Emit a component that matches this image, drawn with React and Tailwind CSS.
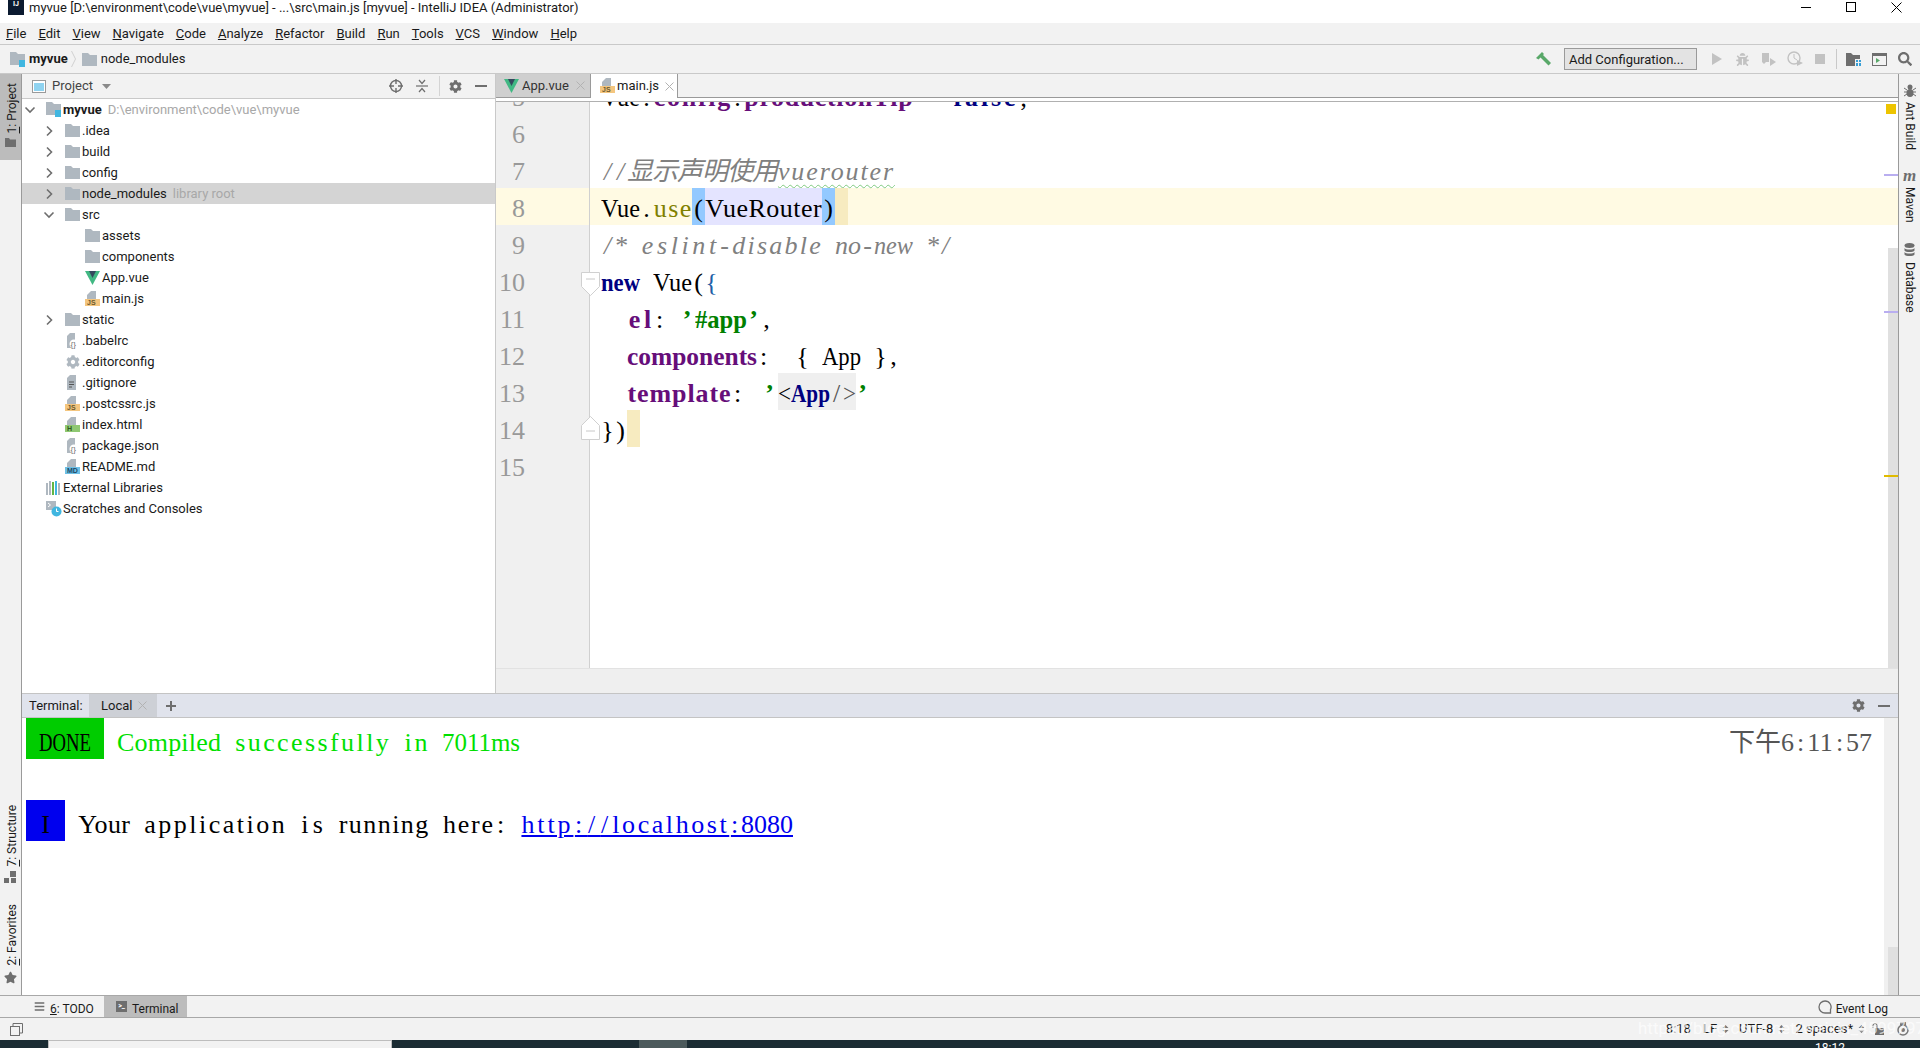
import { FaCog, FaBug, FaStar, FaSearch, FaBars } from "react-icons/fa";

const UI_FONT = "font-['Roboto','Liberation_Sans',sans-serif]";

const MENU = ["File", "Edit", "View", "Navigate", "Code", "Analyze", "Refactor", "Build", "Run", "Tools", "VCS", "Window", "Help"];

const TREE = [
  { name: "myvue", level: 0, open: true, icon: "project", bold: true, hint: "D:\\environment\\code\\vue\\myvue" },
  { name: ".idea", level: 1, closed: true, icon: "folder" },
  { name: "build", level: 1, closed: true, icon: "folder" },
  { name: "config", level: 1, closed: true, icon: "folder" },
  { name: "node_modules", level: 1, closed: true, icon: "folder", hint: "library root", selected: true },
  { name: "src", level: 1, open: true, icon: "folder" },
  { name: "assets", level: 2, icon: "folder" },
  { name: "components", level: 2, icon: "folder" },
  { name: "App.vue", level: 2, icon: "vue" },
  { name: "main.js", level: 2, icon: "js" },
  { name: "static", level: 1, closed: true, icon: "folder" },
  { name: ".babelrc", level: 1, icon: "json" },
  { name: ".editorconfig", level: 1, icon: "gear" },
  { name: ".gitignore", level: 1, icon: "text" },
  { name: ".postcssrc.js", level: 1, icon: "js" },
  { name: "index.html", level: 1, icon: "html" },
  { name: "package.json", level: 1, icon: "json" },
  { name: "README.md", level: 1, icon: "md" },
  { name: "External Libraries", level: 0, icon: "libs" },
  { name: "Scratches and Consoles", level: 0, icon: "scratch" },
];

const LEVEL_PADDING = ["pl-0", "pl-[19px]", "pl-[39px]"];

// the IDE font is a serif set in 13px cells, so every token is fitted to its cell count
const CELL = 13;
const measure = document.createElement("canvas").getContext("2d");
const TOKENS = /(\s+|[.,:;(){}<>/*'’-])/;

function Mono({ text, bold, italic, className = "" }) {
  measure.font = `${italic ? "italic " : ""}${bold ? "bold " : ""}26px "Liberation Serif"`;
  const parts = text.split(TOKENS).filter(Boolean);
  return (
    <span className={`${bold ? "font-bold" : ""} ${italic ? "italic" : ""} ${className}`}>
      {parts.map((part, i) => {
        const cells = part.length * CELL;
        const natural = measure.measureText(part).width;
        const t = (cells - natural) / part.length;
        // too wide for its cells: squeeze the glyphs rather than let them collide
        if (t < 0) {
          return (
            <span
              key={i}
              className="inline-block origin-left"
              style={{ width: cells, transform: `scaleX(${cells / natural})` }}
            >
              {part}
            </span>
          );
        }
        return (
          <span key={i} style={{ letterSpacing: t, marginLeft: t / 2, marginRight: -t / 2 }}>
            {part}
          </span>
        );
      })}
    </span>
  );
}

function Folder({ className = "" }) {
  return (
    <svg width="15" height="13" viewBox="0 0 15 13" className={className}>
      <path d="M0 0h6l2 2h7v11H0z" fill="#AFB8C0" />
    </svg>
  );
}

function ProjectFolder() {
  return (
    <svg width="16" height="15" viewBox="0 0 16 15">
      <path d="M0 0h6l2 2h7v11H0z" fill="#AFB8C0" />
      <rect x="9" y="8" width="6" height="7" fill="#40B6E0" />
    </svg>
  );
}

function VueIcon() {
  return (
    <svg width="15" height="14" viewBox="0 0 15 14">
      <path d="M0 0h15L7.5 14z" fill="#41B883" />
      <path d="M4 0h7L7.5 7z" fill="#35495E" />
    </svg>
  );
}

function LabelFile({ label, color, dark }) {
  return (
    <svg width="16" height="16" viewBox="0 0 16 16">
      <path d="M6 0h5v8H2V4z" fill="#AFB8C0" />
      <rect x="0" y="8" width="15" height="7" fill={color} />
      <text x="2" y="14.4" fontSize="7" fontFamily="Liberation Sans" fontWeight="700" fill={dark}>{label}</text>
    </svg>
  );
}

function JsonFile() {
  return (
    <svg width="15" height="16" viewBox="0 0 15 16">
      <path d="M5 0h5v15H2V3z" fill="#AFB8C0" />
      <circle cx="9" cy="11" r="4.5" fill="#fff" />
      <text x="5.6" y="14" fontSize="8" fontFamily="Liberation Sans" fill="#6e6e6e">{"{}"}</text>
    </svg>
  );
}

function TextFile() {
  return (
    <svg width="15" height="16" viewBox="0 0 15 16">
      <path d="M5 0h6v15H2V3z" fill="#AFB8C0" />
      <path d="M4 7h5M4 9.5h5M4 12h3" stroke="#555" strokeWidth="1" />
    </svg>
  );
}

function LibsIcon() {
  return (
    <svg width="15" height="14" viewBox="0 0 15 14">
      <rect x="0" y="2" width="2" height="12" fill="#AFB8C0" />
      <rect x="3" y="0" width="2" height="14" fill="#AFB8C0" />
      <rect x="6" y="1" width="2" height="13" fill="#62B543" />
      <rect x="9" y="0" width="2" height="14" fill="#40B6E0" />
      <rect x="12" y="2" width="2" height="12" fill="#AFB8C0" />
    </svg>
  );
}

function ScratchIcon() {
  return (
    <svg width="16" height="16" viewBox="0 0 16 16">
      <rect x="0" y="0" width="10" height="9" fill="#AFB8C0" />
      <path d="M2 2l2.5 2L2 6" stroke="#fff" fill="none" />
      <circle cx="10.5" cy="10.5" r="5" fill="#40B6E0" />
      <path d="M10.5 7.5v3h2" stroke="#fff" fill="none" />
    </svg>
  );
}

function TreeIcon({ type }) {
  if (type === "project") return <ProjectFolder />;
  if (type === "folder") return <Folder />;
  if (type === "vue") return <VueIcon />;
  if (type === "js") return <LabelFile label="JS" color="#F4C67F" dark="#6b5a2e" />;
  if (type === "html") return <LabelFile label="H" color="#8FC872" dark="#2f5a1e" />;
  if (type === "md") return <LabelFile label="MD" color="#6EC0E6" dark="#1d4a66" />;
  if (type === "json") return <JsonFile />;
  if (type === "text") return <TextFile />;
  if (type === "gear") return <FaCog className="text-[#AFB8C0] text-[14px] ml-px" />;
  if (type === "libs") return <LibsIcon />;
  return <ScratchIcon />;
}

function Chevron({ open }) {
  return (
    <svg width="16" height="12" viewBox="0 0 16 12">
      {open ? (
        <path d="M3.5 3.5L8 8l4.5-4.5" stroke="#6e6e6e" strokeWidth="1.6" fill="none" />
      ) : (
        <path d="M6 1.5L10.5 6 6 10.5" stroke="#6e6e6e" strokeWidth="1.6" fill="none" />
      )}
    </svg>
  );
}

function TreeRow({ item }) {
  return (
    <div className={`flex items-center h-[21px] ${LEVEL_PADDING[item.level]} ${item.selected ? "bg-[#d4d4d4]" : ""}`}>
      <span className="w-4 shrink-0 flex items-center">
        {(item.open || item.closed) && <Chevron open={item.open} />}
      </span>
      <span className="w-[17px] ml-2 shrink-0 flex items-center">
        <TreeIcon type={item.icon} />
      </span>
      <span className={`text-[13px] text-[#1a1a1a] whitespace-nowrap ${item.bold ? "font-bold" : ""}`}>{item.name}</span>
      {item.hint && <span className="ml-[6px] text-[13px] text-[#a8a8a8] whitespace-nowrap">{item.hint}</span>}
    </div>
  );
}

function Underlined({ text }) {
  return (
    <span>
      <span className="underline">{text[0]}</span>
      {text.slice(1)}
    </span>
  );
}

function Close({ className = "" }) {
  return (
    <svg width="9" height="9" viewBox="0 0 9 9" className={`shrink-0 ${className}`}>
      <path d="M0.5 0.5l8 8M8.5 0.5l-8 8" stroke="#b2b2b2" strokeWidth="1" />
    </svg>
  );
}

function MinusBar() {
  return <span className="block w-3 h-[2px] bg-[#6e6e6e]" />;
}

function Hammer() {
  return (
    <svg width="16" height="16" viewBox="0 0 16 16">
      <path d="M0 7l6-6 2 2-1 1 8 8-2.5 2.500-8-8-2 2z" fill="#59A869" />
    </svg>
  );
}

function ToolbarIcons() {
  return (
    <div className="flex items-center h-full">
      <Hammer />
      <button className="ml-3 w-[133px] h-[22px] bg-[#e3e3e3] border border-[#9a9a9a] text-[13px] text-[#1a1a1a] text-left pl-1 leading-none">
        Add Configuration...
      </button>
      <svg width="12" height="14" viewBox="0 0 12 14" className="ml-[14px]">
        <path d="M1 1l10 6-10 6z" fill="#c2c2c2" />
      </svg>
      <FaBug className="ml-[13px] text-[#c2c2c2] text-[13px]" />
      <svg width="16" height="15" viewBox="0 0 16 15" className="ml-[12px]">
        <path d="M1 1h7v9H5l-2 2-2-2z" fill="#c2c2c2" />
        <path d="M9 6l6 4-6 4z" fill="#c2c2c2" />
      </svg>
      <svg width="17" height="16" viewBox="0 0 17 16" className="ml-[10px]">
        <circle cx="7" cy="7" r="6" stroke="#c2c2c2" strokeWidth="1.4" fill="none" />
        <path d="M7 3v4l3 2" stroke="#c2c2c2" fill="none" />
        <path d="M10 9l6 3-6 3z" fill="#c2c2c2" />
      </svg>
      <span className="ml-[11px] w-[10px] h-[10px] bg-[#c2c2c2]" />
      <span className="ml-[11px] w-px h-5 bg-[#c9c9c9]" />
      <svg width="15" height="13" viewBox="0 0 15 13" className="ml-[9px]">
        <path d="M0 0h5l2 2h7v4H9v7H0z" fill="#6e6e6e" />
        <rect x="10" y="7" width="2" height="2" fill="#389FD6" />
        <rect x="13" y="7" width="2" height="2" fill="#389FD6" />
        <rect x="10" y="10" width="2" height="3" fill="#389FD6" />
        <rect x="13" y="10" width="2" height="3" fill="#389FD6" />
      </svg>
      <svg width="15" height="13" viewBox="0 0 15 13" className="ml-[11px]">
        <rect x="0.5" y="0.500" width="14" height="12" fill="none" stroke="#6e6e6e" />
        <rect x="0.5" y="0.500" width="14" height="2.500" fill="#6e6e6e" />
        <path d="M4 5l4 2.500-4 2.500z" fill="#59A869" />
      </svg>
      <FaSearch className="ml-[11px] text-[#6e6e6e] text-[14px]" />
    </div>
  );
}

function TargetIcon() {
  return (
    <svg width="14" height="14" viewBox="0 0 14 14">
      <circle cx="7" cy="7" r="5.5" stroke="#6e6e6e" strokeWidth="1.4" fill="none" />
      <path d="M7 0v5M7 9v5M0 7h5M9 7h5" stroke="#6e6e6e" strokeWidth="1.4" />
    </svg>
  );
}

function CollapseIcon() {
  return (
    <svg width="12" height="14" viewBox="0 0 12 14">
      <path d="M0 7h12" stroke="#6e6e6e" strokeWidth="1.200" />
      <path d="M3 1l3 3.500L9 1M3 13l3-3.500L9 13" stroke="#6e6e6e" strokeWidth="1.200" fill="none" />
    </svg>
  );
}

function TabFileIcon({ type }) {
  if (type === "vue") return <VueIcon />;
  return <LabelFile label="JS" color="#F4C67F" dark="#6b5a2e" />;
}

function ProjectPanel() {
  return (
    <div className="w-[474px] shrink-0 bg-white border-r border-[#c9c9c9] flex flex-col">
      <div className="h-[25px] bg-[#f2f2f2] border-b border-[#c9c9c9] flex items-center pl-[10px] pr-2">
        <svg width="14" height="13" viewBox="0 0 14 13">
          <rect x="0.5" y="0.500" width="13" height="12" fill="#fff" stroke="#9a9a9a" />
          <rect x="2" y="3" width="10" height="8" fill="#8FD3F0" />
        </svg>
        <span className="ml-[6px] text-[13px] text-[#444]">Project</span>
        <svg width="9" height="5" viewBox="0 0 9 5" className="ml-[9px]">
          <path d="M0 0h9L4.500 5z" fill="#8a8a8a" />
        </svg>
        <span className="ml-auto flex items-center">
          <TargetIcon />
          <span className="ml-[13px]"><CollapseIcon /></span>
          <span className="ml-[11px] w-px h-5 bg-[#d4d4d4]" />
          <FaCog className="ml-[9px] text-[#6e6e6e] text-[13px]" />
          <span className="ml-[13px]"><MinusBar /></span>
        </span>
      </div>
      <div className="flex-1 overflow-hidden">
        {TREE.map((item) => (
          <TreeRow key={item.name} item={item} />
        ))}
      </div>
    </div>
  );
}

const NUMBERS = [5, 6, 7, 8, 9, 10, 11, 12, 13, 14, 15];

const PURPLE = "text-[#660e7a]";
const NAVY = "text-[#000080]";
const GREEN = "text-[#008000]";
const COMMENT = "text-[#808080]";
const BLOCK = "inline-block h-[37px] align-top";

function CodeLine({ children, className = "" }) {
  return <div className={`h-[37px] leading-[41px] pl-[11px] whitespace-pre ${className}`}>{children}</div>;
}

function Editor() {
  return (
    <div className="flex-1 min-w-0 flex flex-col">
      <div className="h-[24px] bg-[#f2f2f2] flex border-b border-[#9a9a9a] shrink-0">
        <div className="w-[95px] bg-[#cfcfcf] border-r border-[#9a9a9a] flex items-center pl-[8px]">
          <TabFileIcon type="vue" />
          <span className="ml-[3px] w-[48px] text-[13px] leading-[18px] text-[#333]">App.vue</span>
          <Close className="ml-[6px]" />
        </div>
        <div className="w-[87px] bg-white border-r border-[#9a9a9a] flex items-center pl-[9px] -mb-px">
          <TabFileIcon type="js" />
          <span className="ml-[1px] w-[41px] text-[13px] leading-[18px] text-[#1a1a1a]">main.js</span>
          <Close className="ml-[7px]" />
        </div>
      </div>
      <div className="h-[4px] bg-white border-b border-[#b0b0b0] shrink-0" />
      <div className="flex-1 min-h-0 flex relative overflow-hidden font-['Liberation_Serif','Noto_Sans_CJK_SC',serif] text-[26px] text-black">
        <div className="w-[94px] shrink-0 bg-[#f0f0f0] border-r border-[#d0d0d0] relative z-10">
          <div className="-mt-[25px]">
            {NUMBERS.map((n) => (
              <div
                key={n}
                className={`h-[37px] leading-[41px] pr-[64px] text-right text-[#999999] ${n === 8 ? "bg-[#fffae3]" : ""}`}
              >
                {n}
              </div>
            ))}
          </div>
          {/* fold markers */}
          <svg width="19" height="24" viewBox="0 0 19 24" className="absolute left-[85px] top-[170px]">
            <path d="M0.5 0.5h18v14l-9 9-9-9z" fill="#fff" stroke="#d0d0d0" />
            <path d="M5 7h9" stroke="#c8c8c8" />
          </svg>
          <svg width="19" height="24" viewBox="0 0 19 24" className="absolute left-[85px] top-[314px]">
            <path d="M0.5 23.500h18v-14l-9-9-9 9z" fill="#fff" stroke="#d0d0d0" />
            <path d="M5 15h9" stroke="#c8c8c8" />
          </svg>
        </div>
        <div className="flex-1 min-w-0 relative bg-white">
          <div className="-mt-[25px]">
            <CodeLine>
              <Mono text="Vue." />
              <Mono text="config" bold className={PURPLE} />
              <Mono text="." />
              <Mono text="productionTip" bold className={PURPLE} />
              <Mono text=" = " />
              <Mono text="false" bold className={NAVY} />
              <Mono text=";" />
            </CodeLine>
            <CodeLine />
            <CodeLine className={COMMENT}>
              <Mono text="//" italic />
              <span className="italic leading-none tracking-[-1px]">显示声明使用</span>
              <span className="underline decoration-wavy decoration-[#7fc97f] decoration-1 underline-offset-[4px]">
                <Mono text="vuerouter" italic />
              </span>
            </CodeLine>
            <CodeLine className="bg-[#fffae3]">
              <Mono text="Vue." />
              <Mono text="use" className="text-[#808000]" />
              <span className={`bg-[#93c9ff] ${BLOCK}`}><Mono text="(" /></span>
              <span className={`bg-[#e4e4ff] ${BLOCK}`}><Mono text="VueRouter" /></span>
              <span className={`bg-[#93c9ff] ${BLOCK}`}><Mono text=")" /></span>
              <span className={`bg-[#f7ebc0] w-[13px] ${BLOCK}`} />
            </CodeLine>
            <CodeLine className={COMMENT}>
              <Mono text="/* eslint-disable no-new */" italic />
            </CodeLine>
            <CodeLine>
              <Mono text="new" bold className={NAVY} />
              <Mono text=" Vue(" />
              <Mono text="{" className="text-[#1f5fa8]" />
            </CodeLine>
            <CodeLine>
              <Mono text="  " />
              <Mono text="el" bold className={PURPLE} />
              <Mono text=": " />
              <span className={`${GREEN} font-bold inline-block w-[16px] text-center`}>’</span>
              <Mono text="#app" bold className={GREEN} />
              <Mono text="’" bold className={GREEN} />
              <Mono text="," />
            </CodeLine>
            <CodeLine>
              <Mono text="  " />
              <Mono text="components" bold className={PURPLE} />
              <Mono text=":  { App }," />
            </CodeLine>
            <CodeLine>
              <Mono text="  " />
              <Mono text="template" bold className={PURPLE} />
              <Mono text=": " />
              <span className={`${GREEN} font-bold inline-block w-[21px] text-right pr-[4px]`}>’</span>
              <span className={`bg-[#efefef] ${BLOCK}`}>
                <Mono text="<" />
                <Mono text="App" bold className={NAVY} />
                <Mono text="/>" className="text-[#555]" />
              </span>
              <Mono text="’" bold className={GREEN} />
            </CodeLine>
            <CodeLine>
              <Mono text="})" />
              <span className={`bg-[#f7ebc0] w-[13px] ${BLOCK}`} />
            </CodeLine>
          </div>
          {/* scrollbar and error stripe */}
          <div className="absolute right-0 top-[146px] bottom-0 w-[10px] bg-[#e0e0e0]" />
          <div className="absolute right-[2px] top-[2px] w-[10px] h-[10px] bg-[#edc400]" />
          <div className="absolute right-0 top-[72px] w-[14px] h-[2px] bg-[#b9aef0]" />
          <div className="absolute right-0 top-[209px] w-[14px] h-[2px] bg-[#b9aef0]" />
          <div className="absolute right-0 top-[373px] w-[14px] h-[2px] bg-[#e0bb00]" />
        </div>
      </div>
      <div className="h-[25px] bg-[#efefef] border-t border-[#e2e2e2] shrink-0" />
    </div>
  );
}

function Terminal() {
  return (
    <div className="flex-1 min-h-0 flex flex-col">
      <div className="h-[25px] shrink-0 bg-[#e0e3ec] border-y border-[#c4c4c4] flex items-center pl-[7px] pr-2">
        <span className="w-[60px] text-[13px] leading-[18px] text-[#1a1a1a]">Terminal:</span>
        <div className="w-[68px] h-full bg-[#cdd0d6] flex items-center pl-3">
          <span className="w-[30px] text-[13px] leading-[18px] text-[#1a1a1a]">Local</span>
          <Close className="ml-[7px]" />
        </div>
        <svg width="12" height="12" viewBox="0 0 12 12" className="ml-[8px]">
          <path d="M6 1v10M1 6h10" stroke="#6e6e6e" strokeWidth="2" />
        </svg>
        <span className="ml-auto flex items-center">
          <FaCog className="text-[#6e6e6e] text-[13px]" />
          <span className="ml-[13px]"><MinusBar /></span>
        </span>
      </div>
      <div className="flex-1 min-h-0 flex bg-white">
        <div className="flex-1 min-w-0 pl-1 pr-3 font-['Liberation_Serif','Noto_Sans_CJK_SC',serif] text-[26px] text-black">
          <div className="h-[41px] leading-[50px] flex whitespace-pre">
            <span className="bg-[#00cc00] h-[41px]"><Mono text=" DONE " /></span>
            <Mono text=" Compiled successfully in 7011ms" className="text-[#00e000]" />
            <span className="ml-auto text-[#555]">
              <span className="leading-none">下午</span>
              <Mono text="6:11:57" />
            </span>
          </div>
          <div className="h-[41px]" />
          <div className="h-[41px] leading-[50px] flex whitespace-pre">
            <span className="bg-[#0000ee] h-[41px]"><Mono text=" I " /></span>
            <Mono text=" Your application is running here: " />
            <span className="text-[#0000ee] underline"><Mono text="http://localhost:8080" /></span>
          </div>
        </div>
        <div className="w-[14px] bg-[#f0f0f0] shrink-0 flex flex-col justify-end items-end">
          <div className="w-[10px] h-[48px] bg-[#e0e0e0]" />
        </div>
      </div>
    </div>
  );
}

function VerticalLabel({ children, icon }) {
  return (
    <div className="flex flex-col items-center gap-[5px]">
      <span className="[writing-mode:vertical-rl] rotate-180 whitespace-nowrap ml-[2px]">{children}</span>
      {icon}
    </div>
  );
}

function LeftStripe() {
  return (
    <div className="w-[22px] shrink-0 bg-[#f2f2f2] border-r border-[#9a9a9a] flex flex-col items-center text-[12px] text-[#1a1a1a] leading-none">
      <div className="w-full h-[86px] bg-[#bcbcbc] flex flex-col items-center pt-[9px]">
        <VerticalLabel
          icon={<svg width="11" height="9" viewBox="0 0 11 9"><path d="M0 0h4l1 1.500h6V9H0z" fill="#6e6e6e" /></svg>}
        >
          <span className="underline">1</span>: Project
        </VerticalLabel>
      </div>
      <div className="mt-auto flex flex-col items-center pb-[11px] gap-[20px]">
        <VerticalLabel
          icon={
            <svg width="13" height="13" viewBox="0 0 13 13">
              <rect x="6" y="0" width="6" height="6" fill="#6e6e6e" />
              <rect x="0" y="7" width="5" height="5" fill="#6e6e6e" />
              <rect x="7" y="7" width="5" height="5" fill="#6e6e6e" />
            </svg>
          }
        >
          <span className="underline">7</span>: Structure
        </VerticalLabel>
        <VerticalLabel icon={<FaStar className="text-[#6e6e6e] text-[13px]" />}>
          <span className="underline">2</span>: Favorites
        </VerticalLabel>
      </div>
    </div>
  );
}

function RightStripe() {
  return (
    <div className="w-[22px] shrink-0 bg-[#f2f2f2] border-l border-[#9a9a9a] flex flex-col items-center pt-[10px] text-[12px] text-[#1a1a1a] leading-none">
      <svg width="12" height="13" viewBox="0 0 12 13">
        <ellipse cx="6" cy="3" rx="2.500" ry="2.500" fill="#6e6e6e" />
        <ellipse cx="6" cy="9" rx="3.500" ry="4" fill="#6e6e6e" />
        <path d="M0 4l3 2M12 4L9 6M0 12l3-2M12 12l-3-2M0 8h3M12 8H9" stroke="#6e6e6e" />
      </svg>
      <span className="mt-[5px] [writing-mode:vertical-rl] whitespace-nowrap">Ant Build</span>
      <span className="mt-[20px] font-['Liberation_Serif',serif] italic font-bold text-[17px] text-[#6e6e6e] leading-[12px]">m</span>
      <span className="mt-[5px] [writing-mode:vertical-rl] whitespace-nowrap">Maven</span>
      <svg width="11" height="14" viewBox="0 0 11 14" className="mt-[20px]">
        <ellipse cx="5.500" cy="2.500" rx="5" ry="2.500" fill="#6e6e6e" />
        <path d="M0.500 5c1 2 9 2 10 0v2.500c-1 2-9 2-10 0zM0.500 9c1 2 9 2 10 0v2.500c-1 2-9 2-10 0z" fill="#6e6e6e" />
      </svg>
      <span className="mt-[5px] [writing-mode:vertical-rl] whitespace-nowrap">Database</span>
    </div>
  );
}

function StatusArrows() {
  return (
    <svg width="7" height="10" viewBox="0 0 7 10" className="ml-[5px] inline-block">
      <path d="M0.500 4L3.500 1l3 3zM0.500 6l3 3 3-3z" fill="#777" />
    </svg>
  );
}

export default function App() {
  return (
    <div className={`h-[1048px] w-[1920px] overflow-hidden flex flex-col bg-[#f2f2f2] ${UI_FONT}`}>
      {/* title bar */}
      <div className="h-[23px] shrink-0 bg-white flex items-start">
        <div className="w-4 h-[15px] ml-2 bg-[#0b1a30] flex items-start justify-center">
          <span className="text-[7px] leading-[9px] font-bold text-white">IJ</span>
        </div>
        <span className="ml-[5px] text-[13px] leading-[16px] text-[#1a1a1a] whitespace-nowrap">
          myvue [D:\environment\code\vue\myvue] - ...\src\main.js [myvue] - IntelliJ IDEA (Administrator)
        </span>
        <div className="ml-auto flex items-center h-[14px] pr-[18px] gap-[35px]">
          <span className="w-[10px] h-px bg-black" />
          <span className="w-[10px] h-[10px] border border-black" />
          <svg width="11" height="11" viewBox="0 0 11 11">
            <path d="M0.500 0.500l10 10M10.500 0.500l-10 10" stroke="#000" />
          </svg>
        </div>
      </div>

      {/* menu bar */}
      <div className="h-[22px] shrink-0 border-b border-[#c9c9c9] flex items-center pl-[6px] gap-[12px] text-[13px] text-[#1a1a1a]">
        {MENU.map((item) => (
          <Underlined key={item} text={item} />
        ))}
      </div>

      {/* navigation bar */}
      <div className="h-[29px] shrink-0 border-b border-[#c9c9c9] flex items-center pl-[10px] pr-2 text-[13px] text-[#1a1a1a]">
        <ProjectFolder />
        <span className="ml-[3px] font-bold">myvue</span>
        <svg width="6" height="18" viewBox="0 0 6 18" className="ml-[3px]">
          <path d="M0.500 1l4 8-4 8" stroke="#d0d0d0" fill="none" />
        </svg>
        <Folder className="ml-[5px]" />
        <span className="ml-1">node_modules</span>
        <span className="ml-auto h-full">
          <ToolbarIcons />
        </span>
      </div>

      {/* main area */}
      <div className="flex-1 min-h-0 flex">
        <LeftStripe />
        <div className="flex-1 min-w-0 flex flex-col">
          <div className="h-[619px] shrink-0 flex">
            <ProjectPanel />
            <Editor />
          </div>
          <Terminal />
        </div>
        <RightStripe />
      </div>

      {/* tool window buttons */}
      <div className="h-[23px] shrink-0 border-y border-[#a8a8a8] flex items-center text-[12px] text-[#1a1a1a] pl-[34px] pr-[32px]">
        <FaBars className="text-[#6e6e6e] text-[11px]" />
        <span className="ml-[5px] w-[54px] mt-[4px]"><span className="underline">6</span>: TODO</span>
        <div className="w-[83px] h-full bg-[#bcbcbc] flex items-center pl-3">
          <span className="w-[11px] h-[11px] bg-[#6e6e6e] flex items-center justify-center text-[7px] leading-none text-white font-bold">&gt;_</span>
          <span className="ml-[5px] mt-[4px]">Terminal</span>
        </div>
        <svg width="14" height="14" viewBox="0 0 14 14" className="ml-auto">
          <path d="M7 1a6 6 0 0 1 5.500 8.500V13H7A6 6 0 0 1 7 1z" fill="none" stroke="#6e6e6e" strokeWidth="1.300" />
        </svg>
        <span className="ml-[4px] mt-[4px]">Event Log</span>
      </div>

      {/* status bar */}
      <div className="h-[22px] shrink-0 flex items-center relative text-[13px] text-[#1a1a1a] pl-[10px]">
        <svg width="13" height="13" viewBox="0 0 13 13">
          <rect x="0.500" y="3.500" width="9" height="9" fill="none" stroke="#6e6e6e" />
          <path d="M3 3V0.500h9.500V10H10" fill="none" stroke="#6e6e6e" />
        </svg>
        <div className="ml-auto flex items-center pr-[10px]">
          <span>8:18</span>
          <span className="ml-[12px]">LF</span>
          <StatusArrows />
          <span className="ml-[10px]">UTF-8</span>
          <StatusArrows />
          <span className="ml-[10px]">2 spaces*</span>
          <StatusArrows />
          <svg width="12" height="12" viewBox="0 0 12 12" className="ml-[7px]">
            <rect x="3" y="5" width="9" height="7" fill="#6e6e6e" />
            <path d="M1 5V2.500a2 2 0 0 1 4 0V5" stroke="#6e6e6e" fill="none" />
          </svg>
          <svg width="14" height="14" viewBox="0 0 14 14" className="ml-[12px]">
            <circle cx="7" cy="8" r="5" fill="none" stroke="#777" strokeWidth="1.500" />
            <circle cx="7" cy="8" r="2" fill="#777" />
            <rect x="4" y="0" width="6" height="3" fill="#777" />
          </svg>
        </div>
        {/* blog watermark */}
        <span className="absolute left-[1638px] top-0 h-full flex items-center text-[17px] text-white/70 whitespace-nowrap">
          https://blog.csdn.net/weixin_45997975
        </span>
      </div>

      {/* desktop taskbar, cut off */}
      <div className="h-[8px] shrink-0 bg-[#1b2c33] flex overflow-hidden relative">
        <div className="ml-[48px] w-[344px] bg-[#f2f2f2] border-t border-x border-[#bdbdbd]" />
        <div className="ml-[247px] w-[48px] bg-[#4c5a5c]" />
        <span className="absolute left-[1815px] top-[1px] text-[12px] leading-[14px] text-white">18:12</span>
      </div>
    </div>
  );
}
